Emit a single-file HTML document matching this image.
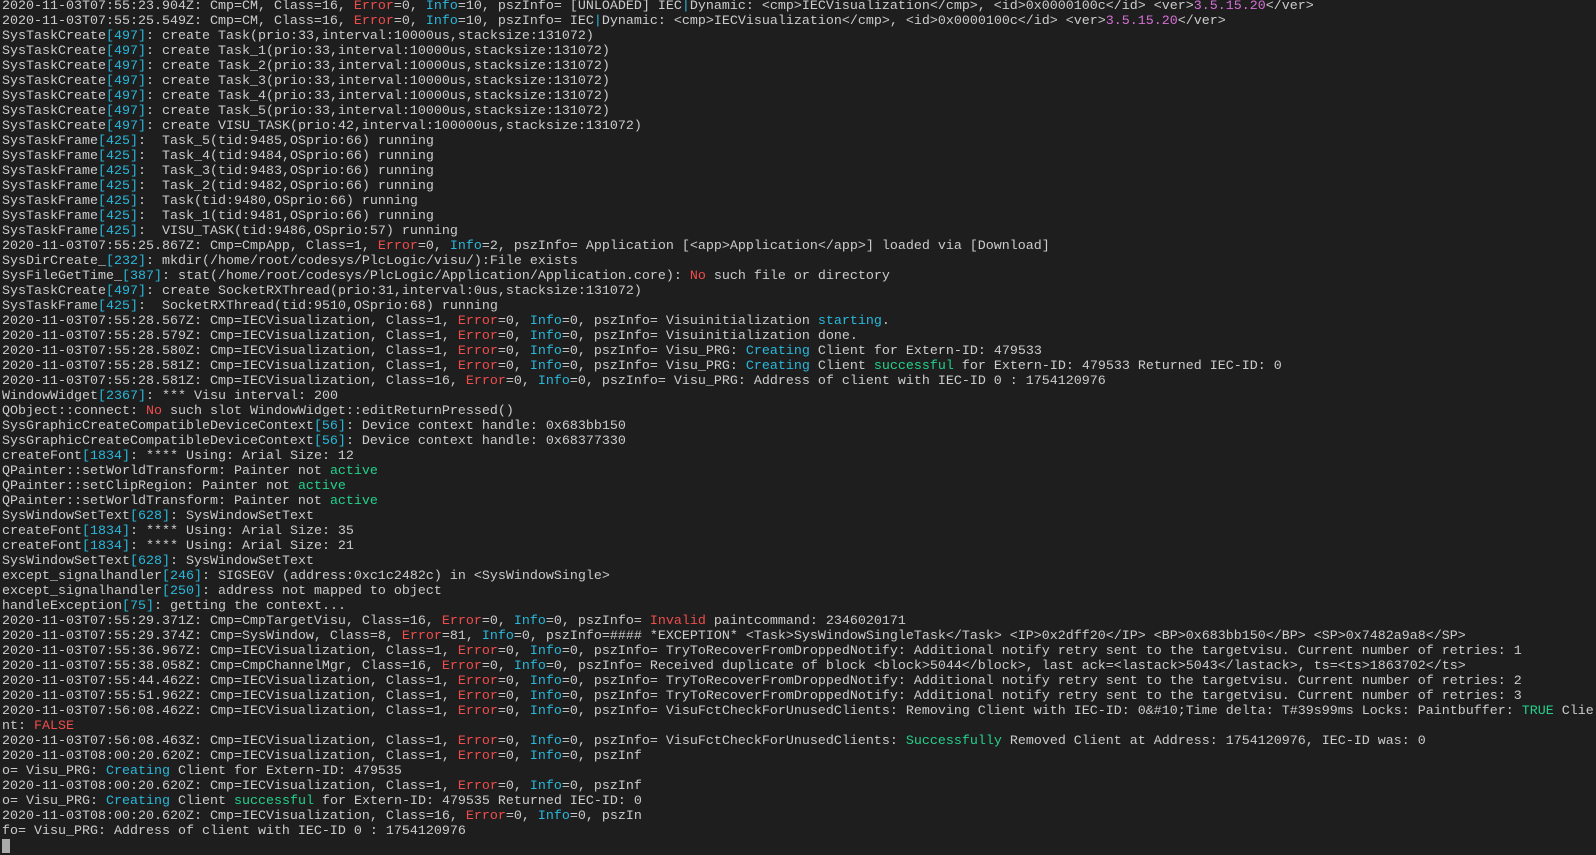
<!DOCTYPE html>
<html><head><meta charset="utf-8"><style>
html,body{margin:0;padding:0;background:#1e1e1e;width:1596px;height:855px;overflow:hidden}
pre{margin:0;padding:0 0 0 2px;position:relative;top:-1px;font-family:"Liberation Mono","DejaVu Sans Mono",monospace;font-size:13.33px;line-height:15px;color:#cccccc;white-space:pre}
.r{color:#f14c4c}.b{color:#29b8db}.g{color:#23d18b}.m{color:#d670d6}
.cur{display:inline-block;width:8px;height:14px;background:#aaaaaa;vertical-align:top}
</style></head><body><pre>2020-11-03T07:55:23.904Z: Cmp=CM, Class=16, <span class="r">Error</span>=0, <span class="b">Info</span>=10, pszInfo= [UNLOADED] IEC<span class="b">|</span>Dynamic: &lt;cmp&gt;IECVisualization&lt;/cmp&gt;, &lt;id&gt;0x0000100c&lt;/id&gt; &lt;ver&gt;<span class="m">3.5.15.20</span>&lt;/ver&gt;
2020-11-03T07:55:25.549Z: Cmp=CM, Class=16, <span class="r">Error</span>=0, <span class="b">Info</span>=10, pszInfo= IEC<span class="b">|</span>Dynamic: &lt;cmp&gt;IECVisualization&lt;/cmp&gt;, &lt;id&gt;0x0000100c&lt;/id&gt; &lt;ver&gt;<span class="m">3.5.15.20</span>&lt;/ver&gt;
SysTaskCreate<span class="b">[497]</span>: create Task(prio:33,interval:10000us,stacksize:131072)
SysTaskCreate<span class="b">[497]</span>: create Task_1(prio:33,interval:10000us,stacksize:131072)
SysTaskCreate<span class="b">[497]</span>: create Task_2(prio:33,interval:10000us,stacksize:131072)
SysTaskCreate<span class="b">[497]</span>: create Task_3(prio:33,interval:10000us,stacksize:131072)
SysTaskCreate<span class="b">[497]</span>: create Task_4(prio:33,interval:10000us,stacksize:131072)
SysTaskCreate<span class="b">[497]</span>: create Task_5(prio:33,interval:10000us,stacksize:131072)
SysTaskCreate<span class="b">[497]</span>: create VISU_TASK(prio:42,interval:100000us,stacksize:131072)
SysTaskFrame<span class="b">[425]</span>:  Task_5(tid:9485,OSprio:66) running
SysTaskFrame<span class="b">[425]</span>:  Task_4(tid:9484,OSprio:66) running
SysTaskFrame<span class="b">[425]</span>:  Task_3(tid:9483,OSprio:66) running
SysTaskFrame<span class="b">[425]</span>:  Task_2(tid:9482,OSprio:66) running
SysTaskFrame<span class="b">[425]</span>:  Task(tid:9480,OSprio:66) running
SysTaskFrame<span class="b">[425]</span>:  Task_1(tid:9481,OSprio:66) running
SysTaskFrame<span class="b">[425]</span>:  VISU_TASK(tid:9486,OSprio:57) running
2020-11-03T07:55:25.867Z: Cmp=CmpApp, Class=1, <span class="r">Error</span>=0, <span class="b">Info</span>=2, pszInfo= Application [&lt;app&gt;Application&lt;/app&gt;] loaded via [Download]
SysDirCreate_<span class="b">[232]</span>: mkdir(/home/root/codesys/PlcLogic/visu/):File exists
SysFileGetTime_<span class="b">[387]</span>: stat(/home/root/codesys/PlcLogic/Application/Application.core): <span class="r">No</span> such file or directory
SysTaskCreate<span class="b">[497]</span>: create SocketRXThread(prio:31,interval:0us,stacksize:131072)
SysTaskFrame<span class="b">[425]</span>:  SocketRXThread(tid:9510,OSprio:68) running
2020-11-03T07:55:28.567Z: Cmp=IECVisualization, Class=1, <span class="r">Error</span>=0, <span class="b">Info</span>=0, pszInfo= Visuinitialization <span class="b">starting</span>.
2020-11-03T07:55:28.579Z: Cmp=IECVisualization, Class=1, <span class="r">Error</span>=0, <span class="b">Info</span>=0, pszInfo= Visuinitialization done.
2020-11-03T07:55:28.580Z: Cmp=IECVisualization, Class=1, <span class="r">Error</span>=0, <span class="b">Info</span>=0, pszInfo= Visu_PRG: <span class="b">Creating</span> Client for Extern-ID: 479533
2020-11-03T07:55:28.581Z: Cmp=IECVisualization, Class=1, <span class="r">Error</span>=0, <span class="b">Info</span>=0, pszInfo= Visu_PRG: <span class="b">Creating</span> Client <span class="g">successful</span> for Extern-ID: 479533 Returned IEC-ID: 0
2020-11-03T07:55:28.581Z: Cmp=IECVisualization, Class=16, <span class="r">Error</span>=0, <span class="b">Info</span>=0, pszInfo= Visu_PRG: Address of client with IEC-ID 0 : 1754120976
WindowWidget<span class="b">[2367]</span>: *** Visu interval: 200
QObject::connect: <span class="r">No</span> such slot WindowWidget::editReturnPressed()
SysGraphicCreateCompatibleDeviceContext<span class="b">[56]</span>: Device context handle: 0x683bb150
SysGraphicCreateCompatibleDeviceContext<span class="b">[56]</span>: Device context handle: 0x68377330
createFont<span class="b">[1834]</span>: **** Using: Arial Size: 12
QPainter::setWorldTransform: Painter not <span class="g">active</span>
QPainter::setClipRegion: Painter not <span class="g">active</span>
QPainter::setWorldTransform: Painter not <span class="g">active</span>
SysWindowSetText<span class="b">[628]</span>: SysWindowSetText
createFont<span class="b">[1834]</span>: **** Using: Arial Size: 35
createFont<span class="b">[1834]</span>: **** Using: Arial Size: 21
SysWindowSetText<span class="b">[628]</span>: SysWindowSetText
except_signalhandler<span class="b">[246]</span>: SIGSEGV (address:0xc1c2482c) in &lt;SysWindowSingle&gt;
except_signalhandler<span class="b">[250]</span>: address not mapped to object
handleException<span class="b">[75]</span>: getting the context...
2020-11-03T07:55:29.371Z: Cmp=CmpTargetVisu, Class=16, <span class="r">Error</span>=0, <span class="b">Info</span>=0, pszInfo= <span class="r">Invalid</span> paintcommand: 2346020171
2020-11-03T07:55:29.374Z: Cmp=SysWindow, Class=8, <span class="r">Error</span>=81, <span class="b">Info</span>=0, pszInfo=#### *EXCEPTION* &lt;Task&gt;SysWindowSingleTask&lt;/Task&gt; &lt;IP&gt;0x2dff20&lt;/IP&gt; &lt;BP&gt;0x683bb150&lt;/BP&gt; &lt;SP&gt;0x7482a9a8&lt;/SP&gt;
2020-11-03T07:55:36.967Z: Cmp=IECVisualization, Class=1, <span class="r">Error</span>=0, <span class="b">Info</span>=0, pszInfo= TryToRecoverFromDroppedNotify: Additional notify retry sent to the targetvisu. Current number of retries: 1
2020-11-03T07:55:38.058Z: Cmp=CmpChannelMgr, Class=16, <span class="r">Error</span>=0, <span class="b">Info</span>=0, pszInfo= Received duplicate of block &lt;block&gt;5044&lt;/block&gt;, last ack=&lt;lastack&gt;5043&lt;/lastack&gt;, ts=&lt;ts&gt;1863702&lt;/ts&gt;
2020-11-03T07:55:44.462Z: Cmp=IECVisualization, Class=1, <span class="r">Error</span>=0, <span class="b">Info</span>=0, pszInfo= TryToRecoverFromDroppedNotify: Additional notify retry sent to the targetvisu. Current number of retries: 2
2020-11-03T07:55:51.962Z: Cmp=IECVisualization, Class=1, <span class="r">Error</span>=0, <span class="b">Info</span>=0, pszInfo= TryToRecoverFromDroppedNotify: Additional notify retry sent to the targetvisu. Current number of retries: 3
2020-11-03T07:56:08.462Z: Cmp=IECVisualization, Class=1, <span class="r">Error</span>=0, <span class="b">Info</span>=0, pszInfo= VisuFctCheckForUnusedClients: Removing Client with IEC-ID: 0&amp;#10;Time delta: T#39s99ms Locks: Paintbuffer: <span class="g">TRUE</span> Clie
nt: <span class="r">FALSE</span>
2020-11-03T07:56:08.463Z: Cmp=IECVisualization, Class=1, <span class="r">Error</span>=0, <span class="b">Info</span>=0, pszInfo= VisuFctCheckForUnusedClients: <span class="g">Successfully</span> Removed Client at Address: 1754120976, IEC-ID was: 0
2020-11-03T08:00:20.620Z: Cmp=IECVisualization, Class=1, <span class="r">Error</span>=0, <span class="b">Info</span>=0, pszInf
o= Visu_PRG: <span class="b">Creating</span> Client for Extern-ID: 479535
2020-11-03T08:00:20.620Z: Cmp=IECVisualization, Class=1, <span class="r">Error</span>=0, <span class="b">Info</span>=0, pszInf
o= Visu_PRG: <span class="b">Creating</span> Client <span class="g">successful</span> for Extern-ID: 479535 Returned IEC-ID: 0
2020-11-03T08:00:20.620Z: Cmp=IECVisualization, Class=16, <span class="r">Error</span>=0, <span class="b">Info</span>=0, pszIn
fo= Visu_PRG: Address of client with IEC-ID 0 : 1754120976
<span class="cur"></span></pre></body></html>
